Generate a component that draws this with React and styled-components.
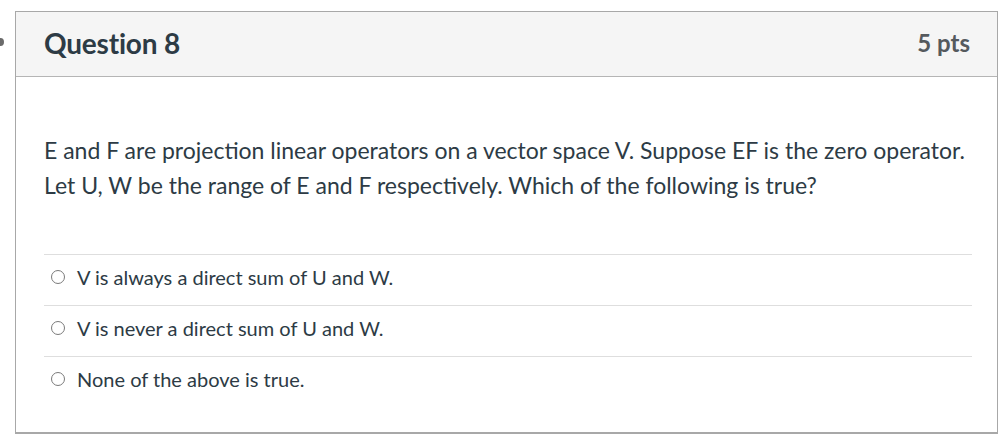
import React from "react";
import styled, { createGlobalStyle } from "styled-components";

const GlobalStyle = createGlobalStyle`
    html, body {
        margin: 0;
        padding: 0;
        background: #fff;
        font-family: Lato, "Liberation Sans", sans-serif;
    }
`;

const Page = styled.div`
    position: relative;
    width: 1006px;
    height: 436px;
    padding: 11px 8px 0 15px;
    box-sizing: border-box;
`;

const Marker = styled.div`
    position: absolute;
    left: -3px;
    top: 38px;
    width: 7px;
    height: 8px;
    border-radius: 50%;
    background: #6b6b6b;
`;

const Card = styled.div`
    border: 1px solid #a8a8a8;
    border-bottom-width: 2px;
    height: 423px;
    box-sizing: border-box;
    display: flex;
    flex-direction: column;
`;

const Header = styled.div`
    display: flex;
    justify-content: space-between;
    align-items: center;
    height: 65px;
    padding: 0 27px 3px 28px;
    box-sizing: border-box;
    background: #f5f5f5;
    border-bottom: 1px solid #b5b5b5;
`;

const Title = styled.h2`
    margin: 0;
    font-size: 28px;
    font-weight: 700;
    color: #2d3b45;
    letter-spacing: -0.2px;
`;

const Points = styled.span`
    font-size: 24px;
    font-weight: 700;
    color: #555a5e;
`;

const Body = styled.div`
    padding: 56px 25px 0 28px;
`;

const Prompt = styled.p`
    margin: 0 0 51px;
    font-size: 23px;
    line-height: 35px;
    color: #2d3b45;
`;

const Answers = styled.div`
    display: flex;
    flex-direction: column;
`;

const Answer = styled.label`
    display: flex;
    align-items: center;
    gap: 12px;
    height: 51px;
    padding: 0 0 6px 7px;
    box-sizing: border-box;
    border-top: 1px solid #dedede;
    font-size: 20px;
    color: #2d3b45;
`;

const Radio = styled.span`
    width: 14px;
    height: 14px;
    border: 1.3px solid #7a7a7a;
    border-radius: 50%;
    box-sizing: border-box;
    flex-shrink: 0;
`;

const answers = [
    "V is always a direct sum of U and W.",
    "V is never a direct sum of U and W.",
    "None of the above is true."
];

const App = () => {
    return (
        <>
            <GlobalStyle />
            <Page>
                <Marker />
                <Card>
                    <Header>
                        <Title>Question 8</Title>
                        <Points>5 pts</Points>
                    </Header>
                    <Body>
                        <Prompt>
                            E and F are projection linear operators on a vector space V. Suppose EF is the zero operator.
                            <br />
                            Let U, W be the range of E and F respectively. Which of the following is true?
                        </Prompt>
                        <Answers>
                            {answers.map(text => (
                                <Answer key={text}>
                                    <Radio />
                                    {text}
                                </Answer>
                            ))}
                        </Answers>
                    </Body>
                </Card>
            </Page>
        </>
    );
};

export default App;
